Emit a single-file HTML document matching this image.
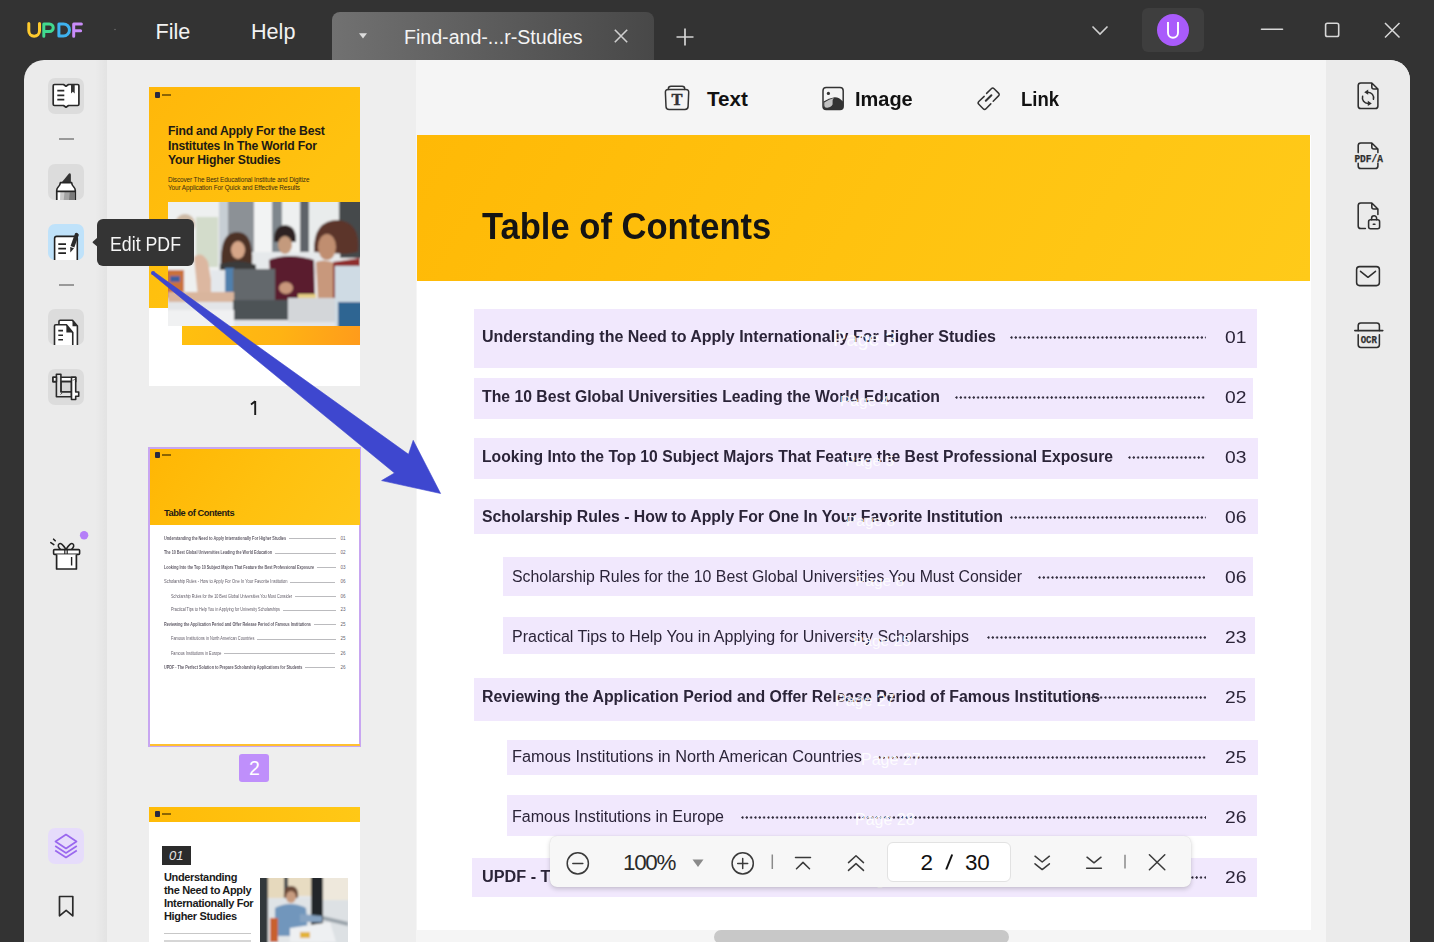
<!DOCTYPE html>
<html><head><meta charset="utf-8">
<style>
*{margin:0;padding:0;box-sizing:border-box}
html,body{width:1434px;height:942px;overflow:hidden;background:#333333;font-family:"Liberation Sans",sans-serif}
div,span,svg{position:absolute}
.ib{left:48px;width:36px;height:36px;border-radius:7px;background:#dcdcdc}
.dv{left:59px;width:15px;height:2px;background:#999}
.row{background:#f1e8fd}
.rt{white-space:nowrap;color:#2b2438;font-size:16px;line-height:20px;transform-origin:0 50%}
.b{font-weight:bold}
.dots{height:3px;background-image:radial-gradient(circle at 1.5px 1.5px,#2f2a3a 0.95px,rgba(47,42,58,0) 1.35px);background-size:4.33px 3px;background-repeat:repeat-x}
.pn{left:1224.6px;font-size:16.9px;transform:scaleX(1.14);transform-origin:0 50%;color:#2b2438;line-height:20px;white-space:nowrap}
.pg{white-space:nowrap;color:rgba(255,255,255,0.88);font-size:17px;line-height:20px}
.tt{font-size:4.6px;line-height:7px;color:rgba(40,34,50,0.75);white-space:nowrap;transform-origin:0 50%}
.tb{font-weight:bold;font-size:20.6px;color:#111;line-height:24px;white-space:nowrap;transform-origin:0 50%}
</style></head><body>
<!-- ===== TITLE BAR ===== -->
<svg style="left:0;top:0" width="120" height="60" viewBox="0 0 120 60">
 <path d="M28.8,23.6 V30.8 A5.35,5.35 0 0 0 39.5,30.8 V23.6" fill="none" stroke="#ffcb2e" stroke-width="3" stroke-linecap="round"/>
 <path d="M43.8,36.2 V23.9 H49.4 A3.85,3.85 0 0 1 49.4,31.6 H43.8" fill="none" stroke="#41d98f" stroke-width="3" stroke-linecap="round" stroke-linejoin="round"/>
 <path d="M58.9,23.9 V36 H63.4 A6.05,6.05 0 0 0 63.4,23.9 Z" fill="none" stroke="#3eb2ef" stroke-width="3" stroke-linejoin="round"/>
 <path d="M73.7,36.2 V23.9 H81.4 M73.7,30.8 H80.6" fill="none" stroke="#c98cf9" stroke-width="3" stroke-linecap="round" stroke-linejoin="round"/>
 <circle cx="115" cy="29.5" r="0.7" fill="#777"/>
</svg>
<span style="left:155.5px;top:19.5px;font-size:21.6px;line-height:24px;color:#f2f2f2">File</span>
<span style="left:251px;top:19.5px;font-size:21.6px;line-height:24px;color:#f2f2f2">Help</span>
<div style="left:332px;top:12px;width:322px;height:48px;border-radius:8px 8px 0 0;background:linear-gradient(90deg,#717171 0%,#5e5e5e 45%,#484848 100%)"></div>
<svg style="left:355px;top:30px" width="16" height="12" viewBox="0 0 16 12"><path d="M4,3.2 H12 L8,8.5 Z" fill="#dcdcdc"/></svg>
<span style="left:404px;top:25px;font-size:19.6px;line-height:24px;color:#f4f4f4;white-space:nowrap">Find-and-...r-Studies</span>
<svg style="left:610px;top:25px" width="22" height="22" viewBox="0 0 22 22"><path d="M4.8,4.8 L17.2,17.2 M17.2,4.8 L4.8,17.2" stroke="#cfcfcf" stroke-width="1.6"/></svg>
<svg style="left:674px;top:26px" width="22" height="22" viewBox="0 0 22 22"><path d="M11,2.5 V19.5 M2.5,11 H19.5" stroke="#d5d5d5" stroke-width="1.7"/></svg>
<svg style="left:1088px;top:20px" width="24" height="20" viewBox="0 0 24 20"><path d="M4.5,6.5 L12,14 L19.5,6.5" fill="none" stroke="#d0d0d0" stroke-width="1.6"/></svg>
<div style="left:1142px;top:8px;width:62px;height:44px;border-radius:6px;background:#3e3e3e"></div>
<div style="left:1156.6px;top:13.7px;width:32.6px;height:32.6px;border-radius:50%;background:#a95bfb"></div>
<svg style="left:1156px;top:13px" width="34" height="34" viewBox="0 0 34 34"><path d="M12,9 V19.8 A5,5 0 0 0 22,19.8 V9" fill="none" stroke="#fff" stroke-width="1.9"/></svg>
<svg style="left:1250px;top:14px" width="170" height="32" viewBox="1250 14 170 32">
 <circle cx="1229" cy="29" r="0.6" fill="#777"/>
 <path d="M1261.5,29.2 H1282.5" stroke="#d8d8d8" stroke-width="1.6" stroke-linecap="round"/>
 <rect x="1325.6" y="23.3" width="13.1" height="13.2" rx="1.8" fill="none" stroke="#d8d8d8" stroke-width="1.6"/>
 <path d="M1385,23 L1399.5,37.5 M1399.5,23 L1385,37.5" stroke="#d8d8d8" stroke-width="1.5"/>
</svg>

<!-- ===== MAIN PANEL ===== -->
<div style="left:24px;top:60px;width:1386px;height:882px;border-radius:20px 20px 0 0;background:#ebebeb;overflow:hidden">
  <div style="left:71px;top:0;width:12px;height:882px;background:linear-gradient(90deg,rgba(0,0,0,0) 0%,rgba(0,0,0,0.035) 100%)"></div>
  <div style="left:83px;top:0;width:309px;height:882px;background:#eeeeee"></div>
  <div style="left:392px;top:0;width:910px;height:882px;background:#f5f5f5"></div>
  <div style="left:1302px;top:0;width:84px;height:882px;background:#ebebeb"></div>
</div>

<!-- ===== LEFT SIDEBAR ===== -->
<div class="ib" style="top:78px"></div>
<svg style="left:48px;top:78px" width="36" height="36" viewBox="0 0 36 36">
 <path d="M6.5,6.5 H15.5 L18,8.2 L20.5,6.5 H29.6 Q30.9,6.5 30.9,7.8 V26.2 Q30.9,27.5 29.6,27.5 H20.5 L18,29.2 L15.5,27.5 H6.5 Q5.2,27.5 5.2,26.2 V7.8 Q5.2,6.5 6.5,6.5 Z" fill="#fff" stroke="#2a2a2a" stroke-width="1.7" stroke-linejoin="round"/>
 <path d="M9.3,12.6 H16.3 M9.3,17.3 H16.3 M9.3,21.6 H16.3" stroke="#2a2a2a" stroke-width="1.7"/>
 <path d="M23,6.5 V15.4 L24.85,13.8 L26.7,15.4 V6.5 Z" fill="#333"/>
</svg>
<div class="dv" style="top:138px"></div>
<div class="ib" style="top:164px"></div>
<svg style="left:48px;top:164px" width="36" height="36" viewBox="0 0 36 36">
 <path d="M13.6,18.4 L21,9.6 Q22.8,8.6 22.9,11 V18.4 Z" fill="#333"/>
 <path d="M9.8,28.1 H26.2 V36 H9.8 Z" fill="#7a7a7a"/>
 <path d="M9.8,28.1 H21.8 L21,36 H9.8 Z" fill="#a3a3a3"/>
 <path d="M9.8,28.1 H16.5 L15.7,36 H9.8 Z" fill="#cacaca"/>
 <path d="M9.8,28.1 H12.3 L12,36 H9.8 Z" fill="#fff"/>
 <path d="M12.4,18.8 H23.6 Q23.8,21 25.8,23 Q27.3,24.5 27.3,26.5 V27.4 H8.7 V26.5 Q8.7,24.5 10.2,23 Q12.2,21 12.4,18.8 Z" fill="#fff"/>
 <path d="M8.7,36 V26.5 Q8.7,24.5 10.2,23 Q12.2,21 12.4,18.6 H23.6 Q23.8,21 25.8,23 Q27.3,24.5 27.3,26.5 V36 M8.7,27.4 H27.3" fill="none" stroke="#262626" stroke-width="1.6" stroke-linejoin="round"/>
</svg>
<div class="ib" style="top:224px;background:#bfe2fa"></div>
<svg style="left:48px;top:224px" width="36" height="36" viewBox="0 0 36 36">
 <path d="M6.6,36 V14.5 Q6.6,12.4 8.7,12.4 H27.2 Q29.3,12.4 29.3,14.5 V36" fill="#fff" stroke="#222" stroke-width="1.6"/>
 <path d="M10.3,20.1 H18 M10.3,24.7 H18 M10.3,29.2 H18" stroke="#222" stroke-width="1.7"/>
 <path d="M27.1,9.3 Q29,7.6 30.9,10.7 L26.3,23.4 L22.56,22 Z" fill="#2b2b2b"/>
 <path d="M22.2,22.9 L26,24.3 L22.3,28.6 Z" fill="#2b2b2b"/>
</svg>
<div class="dv" style="top:284px"></div>
<div class="ib" style="top:309px"></div>
<svg style="left:48px;top:309px" width="36" height="36" viewBox="0 0 36 36">
 <path d="M10.95,36 V12.5 Q10.95,11.2 12.2,11.2 H24.5 L29.4,17.1 V36" fill="#fff" stroke="#2a2a2a" stroke-width="1.6" stroke-linejoin="round"/>
 <path d="M24.5,11.4 V17.2 H29.4 Z" fill="#2a2a2a"/>
 <path d="M6.5,36 V17.1 Q6.5,15.8 7.8,15.8 H18.4 L24.75,23.5 V36" fill="#fff" stroke="#2a2a2a" stroke-width="1.6" stroke-linejoin="round"/>
 <path d="M18.4,16 V23.5 H24.75 Z" fill="#2a2a2a"/>
 <path d="M10.3,21.6 H15 M10.3,26.2 H15 M10.3,30.7 H15" stroke="#2a2a2a" stroke-width="1.6"/>
</svg>
<div class="ib" style="top:369px"></div>
<svg style="left:48px;top:369px" width="36" height="36" viewBox="0 0 36 36">
 <g stroke="#2a2a2a" stroke-width="1.6" stroke-linejoin="round">
 <path d="M5,8.2 H27.7 V12.65 H5 Z" fill="#fff"/>
 <path d="M12.9,12.65 H23.5 V23 H12.9 Z" fill="#d6d6d6"/>
 <path d="M8.4,5.2 H12.9 V23 H23.5 V27.7 H8.4 Z" fill="#e2e2e2"/>
 <path d="M23.5,8.2 H27.7 V23 H30.7 V27.3 H27.7 V30.5 H23.5 Z" fill="#fff"/>
 <path d="M5,8.2 H8.4 V12.65 H5 Z" fill="#fff"/>
 <path d="M12.6,25.5 L14,24.1 M25.2,11.5 L26.6,10.1" stroke-width="0.9"/>
 </g>
</svg>
<svg style="left:44px;top:528px" width="48" height="48" viewBox="44 528 48 48">
 <path d="M50.8,542.6 L53.8,544.6 M53.6,539.2 L55.2,540.8" stroke="#222" stroke-width="1.6" stroke-linecap="round"/>
 <path d="M60.5,549.5 Q57,546 59,544 Q61.5,542 66,549.5 Q70.5,542 73,544 Q75,546 71.5,549.5" fill="none" stroke="#222" stroke-width="1.5"/>
 <rect x="53.6" y="549.6" width="26" height="4.8" rx="1" fill="#fff" stroke="#222" stroke-width="1.6"/>
 <path d="M64.8,549.6 V554.4 M67.2,549.6 V554.4" stroke="#222" stroke-width="1.2"/>
 <path d="M56.6,554.4 V569 H76.4 V554.4" fill="#fff" stroke="#222" stroke-width="1.7" stroke-linejoin="round"/>
 <path d="M71.6,557 V565.5" stroke="#222" stroke-width="1.4"/>
 <circle cx="84.1" cy="535.2" r="4.2" fill="#b57ff8"/>
</svg>
<div class="ib" style="top:828px;background:#e6dcfb"></div>
<svg style="left:48px;top:828px" width="36" height="36" viewBox="0 0 36 36">
 <path d="M18,6.5 L28.5,13.5 L18,20.5 L7.5,13.5 Z" fill="none" stroke="#9a68ee" stroke-width="1.7" stroke-linejoin="round"/>
 <path d="M7.2,18 L18,25 L28.8,18 M7.2,22.5 L18,29.5 L28.8,22.5" fill="none" stroke="#9a68ee" stroke-width="1.7" stroke-linejoin="round"/>
</svg>
<svg style="left:48px;top:888px" width="36" height="36" viewBox="0 0 36 36">
 <path d="M11.5,8.5 H24.8 V27.8 L18.15,22.4 L11.5,27.8 Z" fill="none" stroke="#2a2a2a" stroke-width="1.7" stroke-linejoin="round"/>
</svg>

<!-- ===== THUMB 1 ===== -->
<div style="left:149px;top:87px;width:211px;height:299px;background:#fff"></div>
<div style="left:149px;top:87px;width:211px;height:221px;background:linear-gradient(135deg,#ffb70a 0%,#ffc20f 60%,#ffc414 100%)"></div>
<div style="left:155px;top:92px;width:5px;height:6px;background:#2a2a40;border-radius:1px"></div>
<div style="left:162px;top:94px;width:9px;height:2px;background:rgba(0,0,0,0.45)"></div>
<span style="left:168px;top:124px;font-size:12.2px;line-height:14.6px;font-weight:bold;color:#1e1a14;white-space:nowrap;letter-spacing:-0.2px">Find and Apply For the Best<br>Institutes In The World For<br>Your Higher Studies</span>
<span style="left:168px;top:175.5px;font-size:6.4px;line-height:8px;color:#3a2c10;white-space:nowrap;letter-spacing:-0.1px">Discover The Best Educational Institute and Digitize<br>Your Application For Quick and Effective Results</span>
<svg style="left:168px;top:202px" width="192" height="124" viewBox="0 0 192 124">
 <defs><filter id="bl1" x="-5%" y="-5%" width="110%" height="110%"><feGaussianBlur stdDeviation="0.9"/></filter><clipPath id="cp1"><rect width="192" height="124"/></clipPath></defs>
 <g clip-path="url(#cp1)"><g filter="url(#bl1)">
 <rect x="-4" y="-4" width="200" height="132" fill="#eef0f0"/>
 <rect x="28" y="15" width="22" height="50" fill="#d3dccb"/>
 <rect x="51" y="-4" width="9" height="80" fill="#c7ced4"/>
 <rect x="60" y="-4" width="26" height="66" fill="#8c9196"/>
 <rect x="86" y="-4" width="18" height="70" fill="#f2f3f3"/>
 <rect x="104" y="-4" width="10" height="66" fill="#7f878d"/>
 <rect x="114" y="-4" width="18" height="60" fill="#eef0f0"/>
 <rect x="132" y="-4" width="9" height="60" fill="#5f6469"/>
 <rect x="141" y="-4" width="31" height="64" fill="#e9ecec"/>
 <rect x="171" y="-4" width="25" height="60" fill="#44484b"/>
 <rect x="60" y="50" width="112" height="22" fill="#e6e9eb"/>
 <ellipse cx="17" cy="22" rx="10" ry="10" fill="#cdb9a4"/>
 <path d="M26,55 Q34,48 40,60 L46,95 L30,96 Z" fill="#dcb7a0"/>
 <rect x="-4" y="68" width="20" height="28" fill="#c9713a"/>
 <rect x="2" y="74" width="10" height="6" fill="#3d5fa0"/>
 <path d="M53,62 Q52,30 69,30 Q86,30 84,62 Z" fill="#4e3226"/>
 <ellipse cx="70" cy="48" rx="7" ry="9" fill="#d6a688"/>
 <path d="M52,62 Q70,56 88,63 L88,80 L52,80 Z" fill="#3b3b3b"/>
 <path d="M106,40 Q105,24 117,23 Q129,24 128,40 Z" fill="#2f2420"/>
 <ellipse cx="117" cy="43" rx="7" ry="9" fill="#c49a7d"/>
 <path d="M101,58 Q120,50 146,58 L147,98 L104,98 Z" fill="#5a1d2d"/>
 <ellipse cx="118" cy="86" rx="7" ry="6" fill="#c9977b"/>
 <path d="M146,50 Q145,18 170,18 Q193,20 190,50 L178,52 Z" fill="#5b3429"/>
 <ellipse cx="159" cy="45" rx="9" ry="13" fill="#c08e70"/>
 <path d="M148,60 Q158,56 168,62 L170,100 L150,100 Z" fill="#c8987b"/>
 <path d="M165,60 L192,56 L192,100 L165,100 Z" fill="#8f2d2d"/>
 <rect x="43" y="68" width="14" height="32" fill="#e4e8ec"/>
 <rect x="57" y="66" width="9" height="34" fill="#4f80ad"/>
 <rect x="65" y="67" width="42" height="33" fill="#63676c"/>
 <rect x="0" y="90" width="66" height="12" fill="#d9b59d"/>
 <rect x="-4" y="100" width="200" height="28" fill="#e3e5e8"/>
 <rect x="65" y="98" width="62" height="20" fill="#4e5256"/>
 <rect x="120" y="96" width="50" height="24" fill="#d3d6d9"/>
 <rect x="130" y="92" width="18" height="4" fill="#e6cf84"/>
 <rect x="167" y="64" width="29" height="64" fill="#cfdbe4"/>
 <rect x="170" y="100" width="26" height="28" fill="#2d6592"/>
 <rect x="-4" y="108" width="70" height="20" fill="#f0f1f2"/>
 </g></g>
</svg>
<div style="left:182px;top:326px;width:178px;height:19px;background:linear-gradient(100deg,#ffc00f 0%,#ffb313 55%,#ff9b1b 100%)"></div>
<svg style="left:246px;top:396px" width="16" height="24" viewBox="0 0 16 24"><path d="M9.2,5 V19.1 M9.2,5.2 L5,8.4" fill="none" stroke="#1a1a1a" stroke-width="1.9" stroke-linejoin="round"/></svg>

<!-- ===== THUMB 2 ===== -->
<div style="left:147.5px;top:446.5px;width:213.5px;height:300.5px;background:#fff;border:2px solid #c8a6f1"></div>
<div style="left:149.5px;top:448.5px;width:210px;height:76.5px;background:linear-gradient(125deg,#ffb604 0%,#ffc10f 55%,#ffc719 100%)"></div>
<div style="left:155px;top:452px;width:5px;height:6px;background:#2a2a40;border-radius:1px"></div>
<div style="left:162px;top:454px;width:9px;height:2px;background:rgba(0,0,0,0.45)"></div>
<span style="left:164px;top:507px;font-size:9.3px;line-height:12px;font-weight:bold;color:#1e1a14;white-space:nowrap;letter-spacing:-0.45px">Table of Contents</span>
<div style="left:149.5px;top:743.5px;width:210px;height:2px;background:#ffc030"></div>
<div style="left:0;top:0;width:0;height:0">
<span class="tt b" style="transform:scaleX(0.827);left:164px;top:535.0px">Understanding the Need to Apply Internationally For Higher Studies</span>
<div style="left:288.5px;top:538.3px;width:47.0px;height:0.8px;background:rgba(60,60,70,0.35)"></div>
<span class="tt" style="left:340.5px;top:535.0px">01</span>
<span class="tt b" style="transform:scaleX(0.809);left:164px;top:549.3px">The 10 Best Global Universities Leading the World Education</span>
<div style="left:274.5px;top:552.6px;width:61.0px;height:0.8px;background:rgba(60,60,70,0.35)"></div>
<span class="tt" style="left:340.5px;top:549.3px">02</span>
<span class="tt b" style="transform:scaleX(0.812);left:164px;top:563.8px">Looking Into the Top 10 Subject Majors That Feature the Best Professional Exposure</span>
<div style="left:316.5px;top:567.1px;width:19.0px;height:0.8px;background:rgba(60,60,70,0.35)"></div>
<span class="tt" style="left:340.5px;top:563.8px">03</span>
<span class="tt" style="transform:scaleX(0.880);left:164px;top:578.2px">Scholarship Rules - How to Apply For One In Your Favorite Institution</span>
<div style="left:290.1px;top:581.5px;width:45.4px;height:0.8px;background:rgba(60,60,70,0.35)"></div>
<span class="tt" style="left:340.5px;top:578.2px">06</span>
<span class="tt" style="transform:scaleX(0.820);left:171px;top:592.5px">Scholarship Rules for the 10 Best Global Universities You Must Consider</span>
<div style="left:294.5px;top:595.8px;width:41.0px;height:0.8px;background:rgba(60,60,70,0.35)"></div>
<span class="tt" style="left:340.5px;top:592.5px">06</span>
<span class="tt" style="transform:scaleX(0.830);left:171px;top:606.4px">Practical Tips to Help You in Applying for University Scholarships</span>
<div style="left:282.5px;top:609.7px;width:53.0px;height:0.8px;background:rgba(60,60,70,0.35)"></div>
<span class="tt" style="left:340.5px;top:606.4px">23</span>
<span class="tt b" style="transform:scaleX(0.821);left:164px;top:620.8px">Reviewing the Application Period and Offer Release Period of Famous Institutions</span>
<div style="left:313.5px;top:624.1px;width:22.0px;height:0.8px;background:rgba(60,60,70,0.35)"></div>
<span class="tt" style="left:340.5px;top:620.8px">25</span>
<span class="tt" style="transform:scaleX(0.847);left:171px;top:635.2px">Famous Institutions in North American Countries</span>
<div style="left:257.0px;top:638.5px;width:78.5px;height:0.8px;background:rgba(60,60,70,0.35)"></div>
<span class="tt" style="left:340.5px;top:635.2px">25</span>
<span class="tt" style="transform:scaleX(0.829);left:171px;top:649.5px">Famous Institutions in Europe</span>
<div style="left:223.9px;top:652.8px;width:111.6px;height:0.8px;background:rgba(60,60,70,0.35)"></div>
<span class="tt" style="left:340.5px;top:649.5px">26</span>
<span class="tt b" style="transform:scaleX(0.815);left:164px;top:663.5px">UPDF - The Perfect Solution to Prepare Scholarship Applications for Students</span>
<div style="left:304.9px;top:666.8px;width:30.6px;height:0.8px;background:rgba(60,60,70,0.35)"></div>
<span class="tt" style="left:340.5px;top:663.5px">26</span>
</div>
<div style="left:239.4px;top:754px;width:29.6px;height:28px;border-radius:3px;background:#bf8ffb"></div>
<span style="left:249px;top:757px;font-size:19.5px;line-height:22px;color:#fff">2</span>

<!-- ===== THUMB 3 ===== -->
<div style="left:149px;top:807px;width:211px;height:135px;background:#fff"></div>
<div style="left:149px;top:807px;width:211px;height:15px;background:linear-gradient(90deg,#ffbb08,#ffc816)"></div>
<div style="left:155px;top:811px;width:5px;height:6px;background:#2a2a40;border-radius:1px"></div>
<div style="left:162px;top:813px;width:9px;height:2px;background:rgba(0,0,0,0.45)"></div>
<div style="left:162px;top:846px;width:29px;height:19px;background:#2b2b2b"></div>
<span style="left:169px;top:848px;font-size:13px;line-height:15px;font-style:italic;color:#e8e8e8;white-space:nowrap">01</span>
<span style="left:164px;top:871px;font-size:11px;line-height:13px;font-weight:bold;color:#1a1a1a;white-space:nowrap;letter-spacing:-0.35px">Understanding<br>the Need to Apply<br>Internationally For<br>Higher Studies</span>
<div style="left:164px;top:932.8px;width:87px;height:1.6px;background:rgba(0,0,0,0.22)"></div>
<div style="left:164px;top:940px;width:87px;height:1.6px;background:rgba(0,0,0,0.16)"></div>
<svg style="left:260px;top:878px" width="88" height="64" viewBox="0 0 88 64">
 <defs><filter id="bl3" x="-5%" y="-5%" width="110%" height="110%"><feGaussianBlur stdDeviation="0.8"/></filter><clipPath id="cp3"><rect width="88" height="64"/></clipPath></defs>
 <g clip-path="url(#cp3)"><g filter="url(#bl3)">
 <rect x="-4" y="-4" width="96" height="72" fill="#e3e6e8"/>
 <rect x="-4" y="-4" width="12" height="72" fill="#33373a"/>
 <rect x="8" y="-4" width="16" height="24" fill="#e6d9bd"/>
 <rect x="24" y="-4" width="4" height="40" fill="#4a4e51"/>
 <rect x="28" y="-4" width="24" height="22" fill="#e8dcc2"/>
 <rect x="8" y="20" width="44" height="20" fill="#dfe3e6"/>
 <rect x="51" y="-4" width="12" height="56" fill="#23272a"/>
 <rect x="63" y="-4" width="29" height="26" fill="#eee8dc"/>
 <rect x="63" y="22" width="29" height="46" fill="#dde1e4"/>
 <path d="M63,38 L88,44 L88,48 L63,42 Z" fill="#9aa3aa"/>
 <path d="M24,20 Q23,8 31,8 Q39,8 38,20 Z" fill="#6b4a38"/>
 <ellipse cx="31" cy="19" rx="5" ry="6" fill="#c79b7f"/>
 <path d="M15,30 Q30,22 46,30 L48,58 L15,58 Z" fill="#7196bc"/>
 <path d="M40,36 L62,38 L62,44 L40,44 Z" fill="#86a3c2"/>
 <rect x="10" y="40" width="8" height="24" fill="#c8612e"/>
 <path d="M30,50 L70,44 L76,64 L30,64 Z" fill="#eef0f2"/>
 <rect x="40" y="54" width="10" height="6" fill="#e2b33a"/>
 </g></g>
</svg>


<!-- ===== DOC TOOLBAR ===== -->
<svg style="left:650px;top:80px" width="400" height="36" viewBox="650 80 400 36">
 <g fill="none" stroke="#333" stroke-width="1.5" stroke-linejoin="round" stroke-linecap="round">
  <path d="M668.4,89.4 V88.8 Q668.4,86.3 671,86.3 H682.1 Q684.7,86.3 684.7,88.8 V89.4"/>
  <path d="M668.2,89.4 H685.9 Q688.9,89.4 688.7,92.4 L688.1,106.4 Q688,109.4 685,109.4 H669.1 Q666.1,109.4 666,106.4 L665.4,92.4 Q665.2,89.4 668.2,89.4 Z"/>
  <rect x="823" y="87.6" width="20.2" height="21.8" rx="3.2"/>
  <path d="M986.6,93.4 L991.3,88.7 Q992.7,87.3 994.1,88.7 L998.5,93.1 Q999.9,94.5 998.5,95.9 L993.2,101.2"/>
  <path d="M984.2,96.4 L978.8,101.5 Q977.4,102.9 978.8,104.3 L983.2,108.7 Q984.6,110.1 986,108.7 L990.8,103.9"/>
  <path d="M985.8,100.8 L991.4,95.2" stroke-width="2"/>
 </g>
 <text x="677" y="104.8" font-family="Liberation Serif" font-weight="bold" font-size="16.5" text-anchor="middle" fill="#333" stroke="#333" stroke-width="0.45">T</text>
 <circle cx="828.4" cy="93.4" r="1.6" fill="#333"/>
 <path d="M823.5,101.5 Q829,98 834.6,97.2 Q839,97 843,101.5 V106.4 Q843,109.2 840.2,109.2 H826.3 Q823.5,109.2 823.5,106.4 Z" fill="#333"/>
 <path d="M824.3,102.4 Q829,99.3 833.8,98.1 Q831.6,100.5 832.6,103 Q833.4,106.2 827.5,107.8 Q824.3,108.2 824.3,105.5 Z" fill="#c2c2c2"/>
</svg>
<span class="tb" style="left:707px;top:87px">Text</span>
<span class="tb" style="left:855px;top:87px;transform:scaleX(0.97);transform-origin:0 50%">Image</span>
<span class="tb" style="left:1021px;top:87px;transform:scaleX(0.9);transform-origin:0 50%">Link</span>

<!-- ===== PAGE ===== -->
<div style="left:417px;top:135px;width:894px;height:795px;background:#fff"></div>
<div style="left:417px;top:135px;width:893px;height:146px;background:linear-gradient(120deg,#ffb906 0%,#ffc20f 50%,#ffca19 100%)"></div>
<span style="left:482px;top:206.5px;font-size:36.2px;line-height:40px;font-weight:bold;color:#141414;white-space:nowrap;transform:scaleX(0.955);transform-origin:0 50%">Table of Contents</span>
<div class="row" style="left:474px;top:309px;width:783px;height:59px"></div>
<div class="rt b" style="left:482px;top:326.7px;transform:scaleX(0.9998)">Understanding the Need to Apply Internationally For Higher Studies</div>
<div class="dots" style="left:1010px;top:335.5px;width:196px"></div>
<div class="pn" style="top:327.5px">01</div>
<div class="pg" style="left:833px;top:329px;font-size:20px">Page 3</div>
<div class="row" style="left:474px;top:378px;width:779px;height:41px"></div>
<div class="rt b" style="left:482px;top:386.7px;transform:scaleX(0.9856)">The 10 Best Global Universities Leading the World Education</div>
<div class="dots" style="left:955px;top:395.5px;width:251px"></div>
<div class="pn" style="top:387.5px">02</div>
<div class="pg" style="left:840px;top:391px;font-size:15.5px">Page 4</div>
<div class="row" style="left:474px;top:438px;width:784px;height:41px"></div>
<div class="rt b" style="left:482px;top:446.7px;transform:scaleX(0.9808)">Looking Into the Top 10 Subject Majors That Feature the Best Professional Exposure</div>
<div class="dots" style="left:1128px;top:455.5px;width:78px"></div>
<div class="pn" style="top:447.5px">03</div>
<div class="pg" style="left:845px;top:451px;font-size:15.5px">Page 5</div>
<div class="row" style="left:474px;top:499px;width:784px;height:35px"></div>
<div class="rt b" style="left:482px;top:506.7px;transform:scaleX(0.9872)">Scholarship Rules - How to Apply For One In Your Favorite Institution</div>
<div class="dots" style="left:1010px;top:515.5px;width:196px"></div>
<div class="pn" style="top:507.5px">06</div>
<div class="pg" style="left:846px;top:511px;font-size:15.5px">Page 8</div>
<div class="row" style="left:503px;top:557px;width:750px;height:39px"></div>
<div class="rt" style="left:512px;top:566.7px;transform:scaleX(0.9921)">Scholarship Rules for the 10 Best Global Universities You Must Consider</div>
<div class="dots" style="left:1038px;top:575.5px;width:168px"></div>
<div class="pn" style="top:567.5px">06</div>
<div class="pg" style="left:855px;top:571px;font-size:15.5px">Page 8</div>
<div class="row" style="left:503px;top:617px;width:752px;height:37px"></div>
<div class="rt" style="left:512px;top:626.7px;transform:scaleX(0.9997)">Practical Tips to Help You in Applying for University Scholarships</div>
<div class="dots" style="left:987px;top:635.5px;width:219px"></div>
<div class="pn" style="top:627.5px">23</div>
<div class="pg" style="left:853px;top:631px;font-size:15.5px">Page 25</div>
<div class="row" style="left:474px;top:678px;width:781px;height:43px"></div>
<div class="rt b" style="left:482px;top:686.7px;transform:scaleX(0.9912)">Reviewing the Application Period and Offer Release Period of Famous Institutions</div>
<div class="dots" style="left:1078px;top:695.5px;width:128px"></div>
<div class="pn" style="top:687.5px">25</div>
<div class="pg" style="left:835px;top:691px;font-size:16px">Page 27</div>
<div class="row" style="left:507px;top:740px;width:751px;height:35px"></div>
<div class="rt" style="left:512px;top:746.7px;transform:scaleX(1.0196)">Famous Institutions in North American Countries</div>
<div class="dots" style="left:878px;top:755.5px;width:328px"></div>
<div class="pn" style="top:747.5px">25</div>
<div class="pg" style="left:861px;top:750px;font-size:16px">Page 27</div>
<div class="row" style="left:507px;top:795px;width:750px;height:41px"></div>
<div class="rt" style="left:512px;top:806.7px;transform:scaleX(1.0016)">Famous Institutions in Europe</div>
<div class="dots" style="left:741px;top:815.5px;width:465px"></div>
<div class="pn" style="top:807.5px">26</div>
<div class="pg" style="left:855px;top:810px;font-size:16px">Page 28</div>
<div class="row" style="left:472px;top:858px;width:785px;height:39px"></div>
<div class="rt b" style="left:482px;top:866.7px;transform:scaleX(1.0144)">UPDF - The Perfect Solution to Prepare Scholarship Applications for Students</div>
<div class="dots" style="left:1100px;top:875.5px;width:106px"></div>
<div class="pn" style="top:867.5px">26</div>
<div class="pg" style="left:856px;top:870px;font-size:16px">Page 30</div>

<!-- ===== RIGHT SIDEBAR ===== -->
<svg style="left:1340px;top:70px" width="60" height="290" viewBox="1340 70 60 290">
 <g fill="none" stroke="#2e2e2e" stroke-width="1.55" stroke-linejoin="round" stroke-linecap="round">
  <path d="M1371.8,83 H1360.8 Q1358.2,83 1358.2,85.6 V105.9 Q1358.2,108.5 1360.8,108.5 H1375.3 Q1377.9,108.5 1377.9,105.9 V89 Z M1371.8,83.4 V87 Q1371.8,89 1373.8,89 H1377.7"/>
  <path d="M1368,92.2 A5.6,5.6 0 0 1 1373.4,99.25"/>
  <path d="M1362.6,96.35 A5.6,5.6 0 0 0 1368,103.4"/>
  <path d="M1358.2,152.6 V145.6 Q1358.2,143 1360.8,143 H1371.8 L1377.9,149 V152.6 M1358.2,163.2 V165.9 Q1358.2,168.5 1360.8,168.5 H1375.3 Q1377.9,168.5 1377.9,165.9 V163.2 M1371.8,143.4 V147 Q1371.8,149 1373.8,149 H1377.7"/>
  <path d="M1365.4,228.5 H1360.8 Q1358.2,228.5 1358.2,225.9 V205.6 Q1358.2,203 1360.8,203 H1371.8 L1377.9,209 V214.5 M1371.8,203.4 V207 Q1371.8,209 1373.8,209 H1377.7"/>
  <rect x="1368.6" y="219.8" width="11" height="8.9" rx="2"/>
  <path d="M1371.6,219.8 V218.2 A2.5,2.5 0 0 1 1376.6,218.2 V219.8"/>
  <rect x="1356.6" y="266.6" width="22.8" height="19" rx="3"/>
  <path d="M1360.5,271.3 L1368,277.3 L1375.5,271.3"/>
  <path d="M1358.2,330.6 V325.6 Q1358.2,323 1360.8,323 H1376.8 Q1379.4,323 1379.4,325.6 V330.6"/>
  <path d="M1354.8,330.6 H1382.8"/>
  <path d="M1358.2,334.7 V344.8 Q1358.2,347.4 1360.8,347.4 H1376.8 Q1379.4,347.4 1379.4,344.8 V334.7"/>
 </g>
 <path d="M1364.2,92.2 L1368.2,89.6 V94.8 Z M1371.8,103.4 L1367.8,100.8 V106 Z" fill="#2e2e2e"/>
 <rect x="1372.6" y="223.6" width="3" height="1.4" rx="0.6" fill="#2e2e2e"/>
 <text x="1368.7" y="162" font-family="Liberation Mono" font-weight="bold" font-size="11.2" stroke="#2e2e2e" stroke-width="0.25" text-anchor="middle" fill="#2e2e2e" textLength="28.6" lengthAdjust="spacingAndGlyphs">PDF/A</text>
 <text x="1368.8" y="343" font-family="Liberation Mono" font-weight="bold" font-size="10.6" stroke="#2e2e2e" stroke-width="0.25" text-anchor="middle" fill="#2e2e2e" textLength="16.2" lengthAdjust="spacingAndGlyphs">OCR</text>
</svg>

<!-- ===== TOOLTIP ===== -->
<div style="left:97px;top:219px;width:97.2px;height:46.6px;border-radius:6px;background:#343434"></div>
<svg style="left:88px;top:234px" width="10" height="16" viewBox="0 0 10 16"><path d="M9.5,3.6 L5,7.4 Q4,8.2 5,9 L9.5,12.8 Z" fill="#343434"/></svg>
<span style="left:110px;top:232px;font-size:20.4px;line-height:24px;color:#f6f6f6;white-space:nowrap;transform:scaleX(0.87);transform-origin:0 50%">Edit PDF</span>

<!-- ===== ARROW ===== -->
<svg style="left:0;top:0" width="460" height="520" viewBox="0 0 460 520">
 <path d="M153.9,271.8 L408.5,454.3 L413.2,440.3 L440.6,493.5 L381.6,480.6 L394.5,473 L152.1,274.2 Z" fill="#3e47cf" stroke="#3e47cf" stroke-width="0.6" stroke-linejoin="round"/>
 <circle cx="153" cy="273" r="2" fill="#3e47cf"/>
</svg>

<!-- ===== BOTTOM TOOLBAR ===== -->
<div style="left:549.5px;top:835.5px;width:641.5px;height:51px;border-radius:7px;background:#f7f7f7;box-shadow:0 2px 5px rgba(0,0,0,0.18),0 0 1px rgba(0,0,0,0.15)"></div>
<svg style="left:549px;top:835px" width="642" height="52" viewBox="549 835 642 52">
 <g fill="none" stroke="#3a3a3a" stroke-width="1.5" stroke-linecap="round" stroke-linejoin="round">
  <circle cx="577.8" cy="863.4" r="10.6"/>
  <path d="M572.8,863.4 H582.8"/>
  <circle cx="742.7" cy="863.4" r="10.6"/>
  <path d="M737.7,863.4 H747.7 M742.7,858.4 V868.4"/>
  <path d="M795.5,857.6 H810.5 M796.5,868.8 L803,862.4 L809.5,868.8"/>
  <path d="M848.5,862.6 L856,855.8 L863.5,862.6 M848.5,870.4 L856,863.6 L863.5,870.4"/>
  <path d="M1035,856.2 L1042.2,862 L1049.4,856.2 M1035,863.8 L1042.2,869.6 L1049.4,863.8"/>
  <path d="M1087,857.2 L1094,862.8 L1101,857.2 M1086.6,868.2 H1101.4"/>
  <path d="M1149.4,854.8 L1164.8,869.8 M1164.8,854.8 L1149.4,869.8"/>
 </g>
 <path d="M772.3,854.5 V869 M1125,854.8 V868.4" stroke="#8a8a8a" stroke-width="1.5"/>
 <path d="M692.5,859.5 H703.5 L698,867 Z" fill="#8a8a8a"/>
</svg>
<span style="left:623px;top:849.5px;font-size:22.4px;line-height:26px;color:#2a2a2a;white-space:nowrap;letter-spacing:-1.3px">100%</span>
<div style="left:886.5px;top:841.5px;width:124px;height:40px;border-radius:6px;background:#fff;border:1px solid #e2e2e2"></div>
<span style="left:920.5px;top:849.5px;font-size:22.4px;line-height:26px;color:#111;white-space:nowrap">2</span>
<svg style="left:940px;top:850px" width="16" height="24" viewBox="0 0 16 24"><path d="M12.2,4.5 L6.2,19.5" stroke="#111" stroke-width="2"/></svg>
<span style="left:965px;top:849.5px;font-size:22.4px;line-height:26px;color:#111;white-space:nowrap;letter-spacing:-0.3px">30</span>

<!-- scrollbar -->
<div style="left:714px;top:930px;width:295px;height:14px;border-radius:7px;background:#c8c8c8"></div>
</body></html>
